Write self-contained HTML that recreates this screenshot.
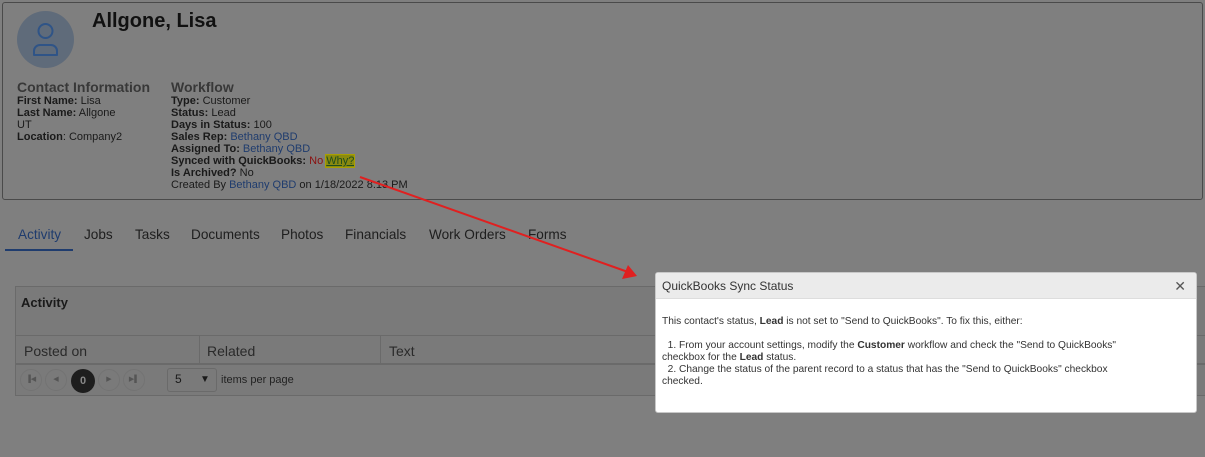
<!DOCTYPE html>
<html><head><style>
*{box-sizing:border-box;margin:0;padding:0}
body{width:1205px;height:457px;overflow:hidden;background:#7f7f7f;font-family:"Liberation Sans",Arial,sans-serif;position:relative;color:#1a1a1a}
.abs{position:absolute}
.card{left:2px;top:2px;width:1201px;height:198px;border:1px solid #4a4a4a;border-radius:3px}
.small{font-size:11px;line-height:12px}
.lnk{color:#1f3c6e}
b{font-weight:bold}
.tab{top:227px;font-size:13.6px;color:#1e1e1e}
</style></head><body>
<div class="abs card"></div>
<div class="abs" style="left:17px;top:11px;width:57px;height:57px;border-radius:50%;background:#5f6b7a"></div>
<svg class="abs" style="left:17px;top:11px" width="57" height="57" viewBox="0 0 57 57"><circle cx="28.5" cy="20" r="7" fill="none" stroke="#2f5487" stroke-width="2"/><path d="M17 44 v-4 a6 6 0 0 1 6-6 h11 a6 6 0 0 1 6 6 v4 z" fill="none" stroke="#2f5487" stroke-width="2" stroke-linejoin="round"/></svg>
<div class="abs" style="left:92px;top:10px;font-size:20px;font-weight:bold;color:#111">Allgone, Lisa</div>
<div class="abs" style="left:17px;top:79px;font-size:14px;font-weight:bold;color:#383838">Contact Information</div>
<div class="abs small" style="left:17px;top:95px"><b>First Name:</b> Lisa<br><b>Last Name:</b> Allgone<br>UT<br><b>Location</b>: Company2</div>
<div class="abs" style="left:171px;top:79px;font-size:14px;font-weight:bold;color:#383838">Workflow</div>
<div class="abs small" style="left:171px;top:95px"><b>Type:</b> Customer<br><b>Status:</b> Lead<br><b>Days in Status:</b> 100<br><b>Sales Rep:</b> <span class="lnk">Bethany QBD</span><br><b>Assigned To:</b> <span class="lnk">Bethany QBD</span><br><b>Synced with QuickBooks:</b> <span style="color:#8b1010">No</span> <span style="background:#8a8a0f;outline:1px solid #a8a000;color:#1e4d1e;text-decoration:underline">Why?</span><br><b>Is Archived?</b> No<br>Created By <span class="lnk">Bethany QBD</span> on 1/18/2022 8:13 PM</div>
<div class="abs tab" style="left:18px;color:#1f3c6e">Activity</div>
<div class="abs" style="left:5px;top:249px;width:68px;height:2px;background:#1f3c6e"></div>
<div class="abs tab" style="left:84px">Jobs</div>
<div class="abs tab" style="left:135px">Tasks</div>
<div class="abs tab" style="left:191px">Documents</div>
<div class="abs tab" style="left:281px">Photos</div>
<div class="abs tab" style="left:345px">Financials</div>
<div class="abs tab" style="left:429px">Work Orders</div>
<div class="abs tab" style="left:528px">Forms</div>
<div class="abs" style="left:15px;top:286px;width:1200px;height:110px;border:1px solid #6a6a6a;background:#7a7a7a"></div>
<div class="abs" style="left:21px;top:295px;font-size:13px;font-weight:bold">Activity</div>
<div class="abs" style="left:16px;top:335px;width:1190px;height:1px;background:#6a6a6a"></div>
<div class="abs" style="left:16px;top:363px;width:1190px;height:2px;background:#6a6a6a"></div>
<div class="abs" style="left:199px;top:336px;width:1px;height:27px;background:#6a6a6a"></div>
<div class="abs" style="left:380px;top:336px;width:1px;height:27px;background:#6a6a6a"></div>
<div class="abs" style="left:24px;top:343px;font-size:14px;color:#2a2a2a">Posted on</div>
<div class="abs" style="left:207px;top:343px;font-size:14px;color:#2a2a2a">Related</div>
<div class="abs" style="left:389px;top:343px;font-size:14px;color:#2a2a2a">Text</div>
<div class="abs" style="left:20px;top:369px;width:22px;height:22px;border:1px solid #737373;border-radius:50%;font-size:7px;text-align:center;line-height:20px;color:#555">▐◀</div>
<div class="abs" style="left:45px;top:369px;width:22px;height:22px;border:1px solid #737373;border-radius:50%;font-size:7px;text-align:center;line-height:20px;color:#555">◀</div>
<div class="abs" style="left:71px;top:369px;width:24px;height:24px;background:#1e1e1e;border-radius:50%;font-size:11px;font-weight:bold;text-align:center;line-height:24px;color:#888">0</div>
<div class="abs" style="left:98px;top:369px;width:22px;height:22px;border:1px solid #737373;border-radius:50%;font-size:7px;text-align:center;line-height:20px;color:#555">▶</div>
<div class="abs" style="left:123px;top:369px;width:22px;height:22px;border:1px solid #737373;border-radius:50%;font-size:7px;text-align:center;line-height:20px;color:#555">▶▌</div>
<div class="abs" style="left:167px;top:368px;width:50px;height:24px;border:1px solid #6a6a6a;border-radius:3px;font-size:12px;padding:3px 0 0 7px">5<span style="position:absolute;left:32px;top:5px;font-size:10px">▼</span></div>
<div class="abs" style="left:221px;top:374px;font-size:11px;color:#222">items per page</div>
<svg class="abs" style="left:0;top:0" width="1205" height="457"><line x1="360" y1="177" x2="628" y2="272" stroke="#e02020" stroke-width="2"/><polygon points="637,276 622,279 628,265" fill="#e02020"/></svg>
<div class="abs" style="left:655px;top:272px;width:542px;height:141px;background:#fff;border:1px solid #c8c8c8;border-radius:3px;overflow:hidden">
<div style="height:26px;background:#ebebeb;border-bottom:1px solid #ddd;font-size:12px;color:#333;padding:6px 0 0 6px;position:relative">QuickBooks Sync Status<span style="position:absolute;right:10px;top:5px;font-size:14px;color:#555">✕</span></div>
<div style="font-size:10.2px;line-height:12px;color:#333;padding:17px 6px 0 6px">This contact's status, <b>Lead</b> is not set to "Send to QuickBooks". To fix this, either:<br><br>&nbsp; 1. From your account settings, modify the <b>Customer</b> workflow and check the "Send to QuickBooks"<br>checkbox for the <b>Lead</b> status.<br>&nbsp; 2. Change the status of the parent record to a status that has the "Send to QuickBooks" checkbox<br>checked.</div>
</div>
</body></html>
